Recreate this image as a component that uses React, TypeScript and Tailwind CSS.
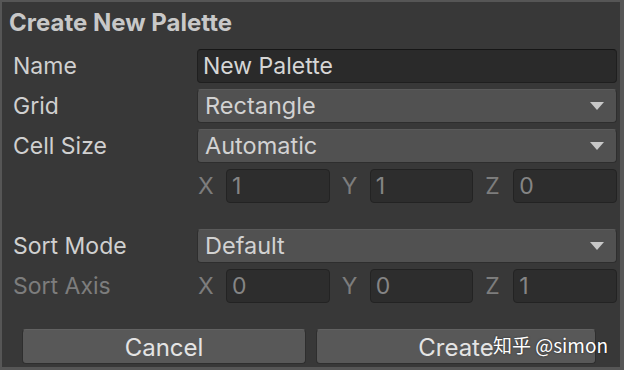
import React from "react";

const font = { fontFamily: 'Inter, "Noto Sans", sans-serif' };

function Caret() {
  return (
    <svg width="14" height="9" viewBox="0 0 14 9" className="shrink-0">
      <polygon points="0,0 14,0 7,8" fill="#c8c8c8" />
    </svg>
  );
}

function Dropdown({ value }: { value: string }) {
  return (
    <div className="flex-1 h-[34px] flex items-center justify-between pl-[7px] pr-[12px] bg-[#515151] border border-[#2e2e2e] border-t-[#5a5a5a] rounded-[4px] text-[#d2d2d2] text-[23.5px]">
      <span>{value}</span>
      <Caret />
    </div>
  );
}

function Vec({ vals }: { vals: string[] }) {
  const labels = ["X", "Y", "Z"];
  return (
    <div className="flex-1 grid grid-cols-3 gap-[11px]">
      {labels.map((l, i) => (
        <div key={l} className="flex items-center">
          <span className="w-[29px] pl-[1px] text-[#7d7d7d]">{l}</span>
          <div className="flex-1 h-[34px] flex items-center pl-[5px] bg-[#2d2d2d] border border-[#232323] rounded-[4px] text-[#858585]">
            {vals[i]}
          </div>
        </div>
      ))}
    </div>
  );
}

function Row({ label, dim, children }: { label: string; dim?: boolean; children: React.ReactNode }) {
  return (
    <div className="flex items-center h-[34px]">
      <div className={`w-[195px] pl-[11px] ${dim ? "text-[#7d7d7d]" : "text-[#d0d0d0]"}`}>{label}</div>
      {children}
    </div>
  );
}

export default function App() {
  return (
    <div className="w-[624px] h-[370px] bg-[#565656] pl-[2px] pt-[2px] pr-[4px] pb-[3px]" style={font}>
      <div className="relative w-full h-full bg-[#383838] flex flex-col text-[23px] leading-none">
        <div className="pl-[7px] pt-[9px] h-[47px] text-[24px] font-bold text-[#c8c8c8]">Create New Palette</div>
        <div className="flex flex-col gap-[6px] pr-[3px]">
          <Row label="Name">
            <div className="flex-1 h-[34px] flex items-center pl-[5px] bg-[#2a2a2a] border border-[#1f1f1f] border-t-[#161616] rounded-[4px] text-[#d6d6d6]">
              New Palette
            </div>
          </Row>
          <Row label="Grid">
            <Dropdown value="Rectangle" />
          </Row>
          <Row label="Cell Size">
            <Dropdown value="Automatic" />
          </Row>
          <Row label="">
            <Vec vals={["1", "1", "0"]} />
          </Row>
          <div className="h-[14px]" />
          <Row label="Sort Mode">
            <Dropdown value="Default" />
          </Row>
          <Row label="Sort Axis" dim>
            <Vec vals={["0", "0", "1"]} />
          </Row>
        </div>
        <div className="flex gap-[10px] pl-[20px] mt-[26px] text-[24px]">
          <div className="w-[284px] h-[35px] flex items-center justify-center pt-[3px] bg-[#585858] border border-[#2e2e2e] border-t-[#626262] rounded-[4px] text-[#e4e4e4]">
            Cancel
          </div>
          <div className="w-[280px] h-[35px] flex items-center justify-center pt-[3px] bg-[#585858] border border-[#2e2e2e] border-t-[#626262] rounded-[4px] text-[#e4e4e4]">
            Create
          </div>
        </div>
        <div
          className="absolute left-[491px] top-[333px] text-[19px] text-white leading-none [text-shadow:0_0_2px_rgba(0,0,0,0.6)]"
          style={{ fontFamily: '"Noto Sans CJK SC", "Noto Sans", sans-serif' }}
        >
          知乎 @simon
        </div>
      </div>
    </div>
  );
}
